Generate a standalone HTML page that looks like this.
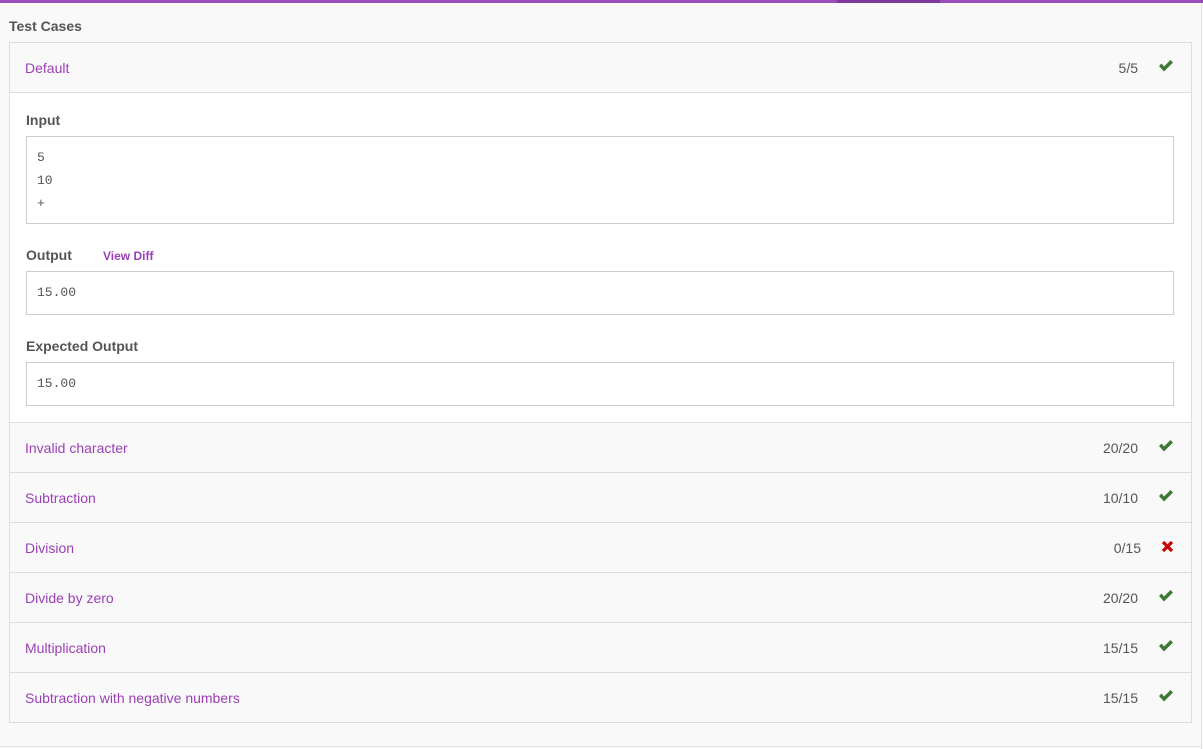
<!DOCTYPE html>
<html><head><style>
body{margin:0;width:1203px;height:749px;background:#f9f9f9;font-family:"Liberation Sans",sans-serif;color:#555;position:relative;overflow:hidden}
.top{position:absolute;left:0;top:0;width:1203px;height:3px;background:#9b4dbb}
.top2{position:absolute;left:837px;top:0;width:103px;height:3px;background:#7d3a9a}
.rb{position:absolute;left:1201px;top:3px;width:1px;height:746px;background:#e3e3e3}
.bb{position:absolute;left:0;top:746px;width:1202px;height:1px;background:#e3e3e3}
h1{position:absolute;left:9px;top:18px;margin:0;font-size:14px;font-weight:bold;color:#555}
.panel{position:absolute;left:9px;top:42px;width:1181px;border:1px solid #ddd;background:#f9f9f9}
.row{height:49px;border-bottom:1px solid #ddd;position:relative;font-size:14px}
.row:last-child{border-bottom:none}
.row .n{position:absolute;left:15px;top:17px;color:#9b3fb5}
.row .s{position:absolute;right:53px;top:17px}
.row svg{position:absolute;right:17px;top:16px}
.body{background:#fff;height:329px;border-bottom:1px solid #ddd;position:relative}
.lbl{position:absolute;left:16px;font-size:14px;font-weight:bold;color:#555}
.box{position:absolute;left:16px;width:1148px;border:1px solid #ccc;font-family:"Liberation Mono",monospace;font-size:13px;color:#555;padding:0 10px;box-sizing:border-box;line-height:23px}
.vd{position:absolute;left:93px;top:156px;font-size:12px;font-weight:bold;color:#9b3fb5}
</style></head><body>
<div class="top"></div><div class="top2"></div><div class="rb"></div><div class="bb"></div>
<h1>Test Cases</h1>
<div class="panel">
<div class="row"><span class="n">Default</span><span class="s">5/5</span><svg width="16" height="14" viewBox="0 0 16 14"><path d="M1 7 L3.5 4.5 L6 7.5 L12.5 1 L15 3.5 L6 12.5 Z" fill="#3c7a33"/></svg></div>
<div class="body">
<div class="lbl" style="top:19px">Input</div>
<div class="box" style="top:43px;height:88px;padding-top:9px">5<br>10<br>+</div>
<div class="lbl" style="top:154px">Output</div><div class="vd">View Diff</div>
<div class="box" style="top:178px;height:44px;padding-top:9px">15.00</div>
<div class="lbl" style="top:245px">Expected Output</div>
<div class="box" style="top:269px;height:44px;padding-top:9px">15.00</div>
</div>
<div class="row"><span class="n">Invalid character</span><span class="s">20/20</span><svg width="16" height="14" viewBox="0 0 16 14"><path d="M1 7 L3.5 4.5 L6 7.5 L12.5 1 L15 3.5 L6 12.5 Z" fill="#3c7a33"/></svg></div>
<div class="row"><span class="n">Subtraction</span><span class="s">10/10</span><svg width="16" height="14" viewBox="0 0 16 14"><path d="M1 7 L3.5 4.5 L6 7.5 L12.5 1 L15 3.5 L6 12.5 Z" fill="#3c7a33"/></svg></div>
<div class="row"><span class="n">Division</span><span class="s" style="right:50px">0/15</span><svg width="13" height="13" viewBox="0 0 13 13" style="right:17px;top:17px"><path d="M2 2 L11 11 M11 2 L2 11" stroke="#c00" stroke-width="3.2"/></svg></div>
<div class="row"><span class="n">Divide by zero</span><span class="s">20/20</span><svg width="16" height="14" viewBox="0 0 16 14"><path d="M1 7 L3.5 4.5 L6 7.5 L12.5 1 L15 3.5 L6 12.5 Z" fill="#3c7a33"/></svg></div>
<div class="row"><span class="n">Multiplication</span><span class="s">15/15</span><svg width="16" height="14" viewBox="0 0 16 14"><path d="M1 7 L3.5 4.5 L6 7.5 L12.5 1 L15 3.5 L6 12.5 Z" fill="#3c7a33"/></svg></div>
<div class="row"><span class="n">Subtraction with negative numbers</span><span class="s">15/15</span><svg width="16" height="14" viewBox="0 0 16 14"><path d="M1 7 L3.5 4.5 L6 7.5 L12.5 1 L15 3.5 L6 12.5 Z" fill="#3c7a33"/></svg></div>
</div>
</body></html>
